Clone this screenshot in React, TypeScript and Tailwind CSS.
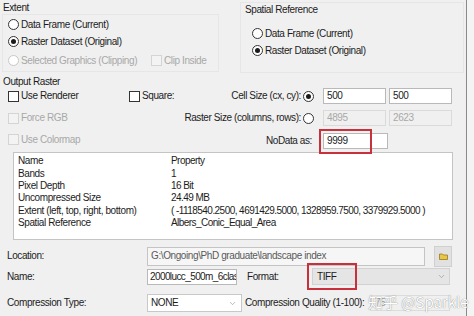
import { ChevronDown } from "lucide-react";

type Opt = { label: string; checked?: boolean; disabled?: boolean };

function Radio({ checked = false, disabled = false }: { checked?: boolean; disabled?: boolean }) {
  return (
    <span
      className={`w-[11px] h-[11px] rounded-full border flex items-center justify-center shrink-0 bg-white ${
        disabled ? "border-[#c8c8c8]" : "border-[#333]"
      }`}
    >
      {checked && <span className="w-[5px] h-[5px] rounded-full bg-[#1a1a1a]" />}
    </span>
  );
}

function Check({ disabled = false }: { disabled?: boolean }) {
  return (
    <span
      className={`w-[11px] h-[11px] border shrink-0 ${
        disabled ? "border-[#d4d4d4] bg-[#f3f3f3]" : "border-[#333] bg-white"
      }`}
    />
  );
}

function RadioRow({ label, checked, disabled }: Opt) {
  return (
    <div className="h-[17px] flex items-center gap-[2px]">
      <Radio checked={checked} disabled={disabled} />
      <span className={disabled ? "text-[#a8a8a8]" : ""}>{label}</span>
    </div>
  );
}

function TextBox({ value, w, disabled = false }: { value: string; w: string; disabled?: boolean }) {
  return (
    <div
      className={`${w} h-[16px] border px-[3px] flex items-center ${
        disabled ? "border-[#dadada] bg-[#f0f0f0] text-[#a8a8a8]" : "border-[#b9b9b9] bg-white"
      }`}
    >
      {value}
    </div>
  );
}

const props = [
  ["Name", "Property"],
  ["Bands", "1"],
  ["Pixel Depth", "16 Bit"],
  ["Uncompressed Size", "24.49 MB"],
  ["Extent (left, top, right, bottom)", "( -1118540.2500, 4691429.5000, 1328959.7500, 3379929.5000 )"],
  ["Spatial Reference", "Albers_Conic_Equal_Area"],
];

export default function App() {
  return (
    <div className="w-[474px] h-[316px] overflow-hidden bg-[#f0f0f0] flex font-['Liberation_Sans',Arial,sans-serif] text-[10px] tracking-[-0.4px] text-[#1c1c1c] leading-[12px]">
      <div className="w-[467px] relative flex flex-col border-r border-[#8a8a8a]">
        {/* top groups */}
        <div className="flex h-[76px]">
          <div className="ml-[2px] w-[217px] flex flex-col">
            <div className="mt-[2px] h-[12px] pl-[1px]">Extent</div>
            <div className="h-[58px] border border-[#e6e6e6] pl-[5px] pt-[1px]">
              <RadioRow label="Data Frame (Current)" />
              <RadioRow label="Raster Dataset (Original)" checked />
              <div className="mt-[2px] h-[17px] flex items-center">
                <div className="w-[143px] flex items-center gap-[2px]">
                  <Radio disabled />
                  <span className="text-[#a8a8a8]">Selected Graphics (Clipping)</span>
                </div>
                <div className="flex items-center gap-[2px]">
                  <Check disabled />
                  <span className="text-[#a8a8a8]">Clip Inside</span>
                </div>
              </div>
            </div>
          </div>
          <div className="ml-[21px] w-[224px] mt-[2px] h-[71px] border border-[#e6e6e6] flex flex-col">
            <div className="h-[12px] pl-[4px] mt-[1px]">Spatial Reference</div>
            <div className="pl-[11px] mt-[9px]">
              <RadioRow label="Data Frame (Current)" />
              <RadioRow label="Raster Dataset (Original)" checked />
            </div>
          </div>
        </div>

        {/* output raster */}
        <div className="h-[12px] pl-[3px]">Output Raster</div>
        <div className="h-[16px] flex items-center pl-[8px] pr-[14px]">
          <div className="w-[121px] flex items-center gap-[2px]">
            <Check />
            <span>Use Renderer</span>
          </div>
          <div className="flex items-center gap-[2px]">
            <Check />
            <span>Square:</span>
          </div>
          <div className="flex-1 text-right pr-[2px]">Cell Size (cx, cy):</div>
          <Radio checked />
          <div className="w-[9px]" />
          <TextBox value="500" w="w-[63px]" />
          <div className="w-[3px]" />
          <TextBox value="500" w="w-[63px]" />
        </div>
        <div className="h-[16px] mt-[6px] flex items-center pl-[8px] pr-[14px]">
          <div className="w-[121px] flex items-center gap-[2px]">
            <Check disabled />
            <span className="text-[#a8a8a8]">Force RGB</span>
          </div>
          <div className="flex-1 text-right pr-[2px]">Raster Size (columns, rows):</div>
          <Radio />
          <div className="w-[9px]" />
          <TextBox value="4895" w="w-[63px]" disabled />
          <div className="w-[3px]" />
          <TextBox value="2623" w="w-[63px]" disabled />
        </div>
        <div className="h-[16px] mt-[7px] flex items-center pl-[8px]">
          <div className="w-[121px] flex items-center gap-[2px] -mt-[3px]">
            <Check disabled />
            <span className="text-[#a8a8a8]">Use Colormap</span>
          </div>
          <div className="flex-1 text-right pr-[11px]">NoData as:</div>
          <TextBox value="9999" w="w-[65px]" />
          <div className="w-[78px]" />
        </div>

        {/* property list */}
        <div className="mt-[3px] ml-[13px] w-[440px] h-[88px] bg-white border border-[#c4c4c4] pt-[2px] pl-[4px]">
          {props.map(([k, v]) => (
            <div key={k} className="flex h-[12.4px] items-center">
              <span className="w-[153px] shrink-0">{k}</span>
              <span className="whitespace-nowrap tracking-[-0.55px]">{v}</span>
            </div>
          ))}
        </div>

        {/* file rows */}
        <div className="mt-[6px] h-[20px] flex items-center pl-[7px]">
          <span className="w-[140px]">Location:</span>
          <div className="w-[278px] h-[19px] bg-[#f6f6f6] border border-[#c4c4c4] px-[3px] flex items-center text-[#5a5a5a] whitespace-nowrap overflow-hidden">
            G:\Ongoing\PhD graduate\landscape index
          </div>
          <div className="ml-[9px] w-[18px] h-[21px] bg-[#e1e1e1] border border-[#d0d0d0] flex items-center justify-center">
            <svg width="9" height="8" viewBox="0 0 9 8">
              <path d="M0.5 2 h3 l1 1 h4 v4.5 h-8 z" fill="#e8c64a" stroke="#9a7a20" strokeWidth="0.8" />
            </svg>
          </div>
        </div>
        <div className="mt-[2px] h-[17px] flex items-center pl-[7px]">
          <span className="w-[140px]">Name:</span>
          <div className="w-[90px] h-[16px] bg-white border border-[#b9b9b9] pl-[2px] flex items-center whitespace-nowrap overflow-hidden tracking-[-0.6px]">
            2000lucc_500m_6clas
          </div>
          <span className="ml-[10px] w-[65px]">Format:</span>
          <div className="w-[138px] h-[17px] bg-[#e5e5e5] border border-[#d2d2d2] pl-[4px] pr-[3px] flex items-center justify-between">
            <span>TIFF</span>
            <ChevronDown size={9} color="#888" strokeWidth={1.5} />
          </div>
        </div>
        <div className="mt-[9px] h-[18px] flex items-center pl-[7px]">
          <span className="w-[140px]">Compression Type:</span>
          <div className="w-[95px] h-[18px] bg-white border border-[#c8c8c8] pl-[3px] pr-[4px] flex items-center justify-between">
            <span>NONE</span>
            <ChevronDown size={9} color="#888" strokeWidth={1.5} />
          </div>
          <span className="ml-[3px] w-[125px] whitespace-nowrap">Compression Quality (1-100):</span>
          <div className="w-[80px] h-[16px] bg-[#f0f0f0] border border-[#dcdcdc] pl-[4px] flex items-center text-[#a0a0a0]">
            75
          </div>
        </div>

        {/* highlight boxes */}
        <div className="absolute left-[319px] top-[129px] w-[53px] h-[25px] border-2 border-[#c8313b]" />
        <div className="absolute left-[307px] top-[263px] w-[50px] h-[27px] border-2 border-[#c8313b]" />

        {/* watermark */}
        <div className="absolute left-[368px] top-[293px] text-[15px] leading-[18px] tracking-[0px] text-white font-['Noto_Sans_CJK_SC','Liberation_Sans',sans-serif] [text-shadow:0_0_1px_rgba(0,0,0,0.6)] whitespace-nowrap">
          知乎 @Sparkle
        </div>
      </div>
      <div className="flex-1 bg-[#f4f4f4]" />
    </div>
  );
}
